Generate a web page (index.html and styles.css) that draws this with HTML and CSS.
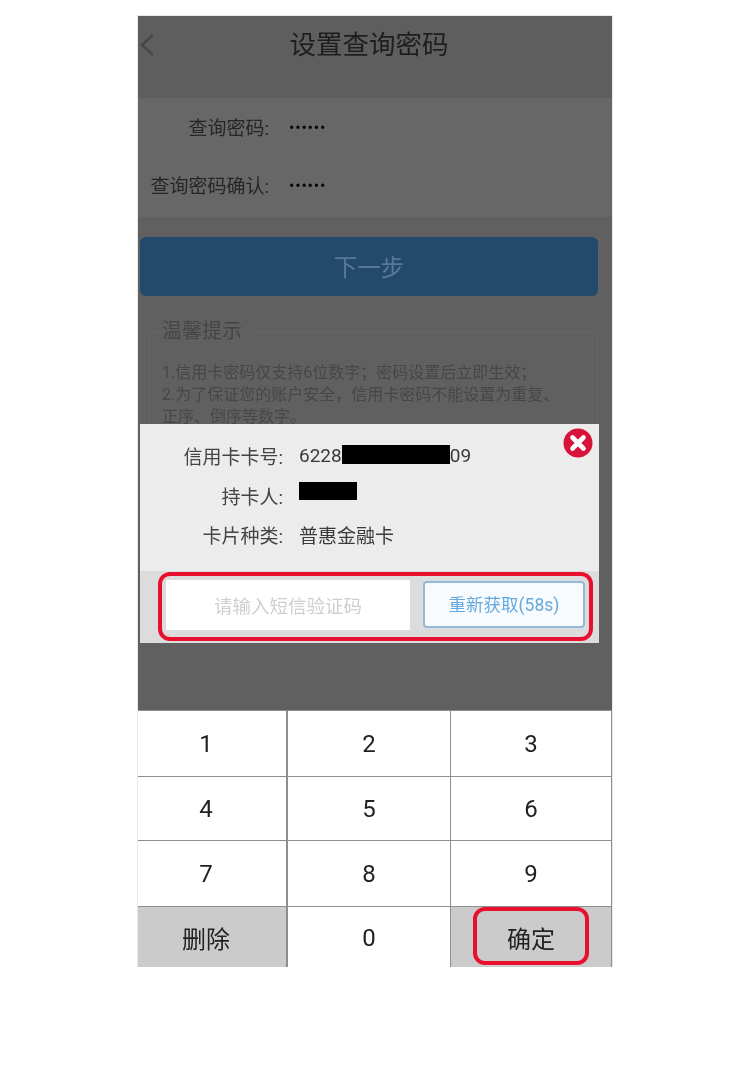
FILE: index.html
```html
<!DOCTYPE html>
<html lang="zh-CN">
<head>
    <meta charset="UTF-8">
    <title>设置查询密码</title>
    <link rel="stylesheet" href="styles.css">
</head>
<body>
    <div class="phone">
        <div class="screen">
            <header class="header">
                <svg class="back" width="16" height="24" viewBox="0 0 16 24"><path d="M14 2 L3 12 L14 22" fill="none" stroke="#474747" stroke-width="2.4"/></svg>
                <h1>设置查询密码</h1>
            </header>

            <div class="form">
                <div class="form-row"><span class="form-label">查询密码:</span><span class="dots">••••••</span></div>
                <div class="form-row"><span class="form-label">查询密码确认:</span><span class="dots">••••••</span></div>
            </div>

            <div class="next-btn">下一步</div>

            <fieldset class="tips">
                <legend>温馨提示</legend>
                <p>1.信用卡密码仅支持6位数字；密码设置后立即生效；</p>
                <p>2.为了保证您的账户安全，信用卡密码不能设置为重复、正序、倒序等数字。</p>
            </fieldset>

            <div class="dialog">
                <svg class="close" width="30" height="30" viewBox="0 0 30 30">
                    <circle cx="15" cy="15" r="14.5" fill="#d8123a"/>
                    <path d="M9.5 9.5 L20.5 20.5 M20.5 9.5 L9.5 20.5" stroke="#fff" stroke-width="4.6" stroke-linecap="round"/>
                </svg>
                <div class="info">
                    <div class="info-row"><span class="info-label">信用卡卡号:</span><span>6228<i class="redact redact-card"></i>09</span></div>
                    <div class="info-row"><span class="info-label">持卡人:</span><span><i class="redact redact-name"></i></span></div>
                    <div class="info-row"><span class="info-label">卡片种类:</span><span>普惠金融卡</span></div>
                </div>
                <div class="sms">
                    <div class="sms-input">请输入短信验证码</div>
                    <div class="sms-btn">重新获取(58s)</div>
                </div>
                <div class="mark mark-sms"></div>
            </div>
        </div>

        <div class="keypad">
            <div class="key">1</div>
            <div class="key">2</div>
            <div class="key">3</div>
            <div class="key">4</div>
            <div class="key">5</div>
            <div class="key">6</div>
            <div class="key">7</div>
            <div class="key">8</div>
            <div class="key">9</div>
            <div class="key key-gray">删除</div>
            <div class="key key-zero">0</div>
            <div class="key key-gray">确定<div class="mark mark-ok"></div></div>
        </div>
    </div>
</body>
</html>
```

FILE: styles.css
```css
/* General */
body {
    margin: 0;
    background: #fff;
    font-family: "Roboto", "Noto Sans CJK SC", sans-serif;
}

.phone {
    width: 474px;
    height: 951px;
    margin: 16px 0 0 138px;
    display: flex;
    flex-direction: column;
    outline: 1px solid #e8e8e8;
    filter: blur(0.5px);
}

/* Dimmed page behind the dialog */
.screen {
    flex: 1;
    position: relative;
    overflow: hidden;
    background: #606060;
}

.header {
    height: 82px;
    position: relative;
    padding-right: 12px;
    background: #5e5e5e;
}

.header h1 {
    margin: 0;
    padding-top: 10px;
    text-align: center;
    font-size: 26.5px;
    line-height: 38px;
    font-weight: 400;
    color: #1e1e1e;
}

.back {
    position: absolute;
    left: 1px;
    top: 17px;
}

.form {
    height: 119px;
    padding-bottom: 3px;
    box-sizing: border-box;
    background: #676767;
    display: flex;
    flex-direction: column;
    justify-content: center;
}

.form-row {
    height: 60px;
    display: flex;
    align-items: center;
}

.form-label {
    width: 131px;
    margin-top: -2px;
    text-align: right;
    font-size: 19px;
    color: #262626;
}

.dots {
    margin-left: 20px;
    font-size: 16px;
    letter-spacing: 0.8px;
    color: #050505;
}

.next-btn {
    height: 59px;
    margin: 20px 14px 0 2px;
    border-radius: 6px;
    background: #23496b;
    color: #587a96;
    font-size: 23.5px;
    line-height: 62px;
    text-align: center;
}

.tips {
    margin: 21px 14px 0 11px;
    padding: 17px 33px 0 12px;
    border: 1px solid #666;
    color: #474747;
    font-size: 16px;
    line-height: 22px;
}

.tips legend {
    padding: 0 15px 0 0;
    font-size: 20px;
    line-height: 28px;
    color: #454545;
}

.tips p {
    margin: 0;
}

/* Dialog */
.dialog {
    position: absolute;
    left: 2px;
    top: 408px;
    width: 459px;
    height: 219px;
    background: #ececec;
}

.close {
    position: absolute;
    left: 423px;
    top: 4px;
}

.info {
    height: 147px;
    padding-top: 12px;
    box-sizing: border-box;
    font-size: 19px;
    color: #3a3a3a;
}

.info-row {
    height: 39.5px;
    display: flex;
    align-items: center;
}

.info-label {
    width: 143px;
    margin-right: 16px;
    text-align: right;
    color: #444;
}

.redact {
    display: inline-block;
    background: #000;
    vertical-align: middle;
}

.redact-card {
    width: 108px;
    height: 19px;
    margin-top: -6px;
}

.redact-name {
    width: 58px;
    height: 18px;
    margin-top: -12px;
}

.sms {
    height: 72px;
    display: flex;
    align-items: flex-start;
    gap: 13px;
    padding: 9px 0 0 26px;
    box-sizing: border-box;
    background: #dcdcdc;
}

.sms-input {
    width: 244px;
    height: 50px;
    background: #fff;
    color: #cfcfcf;
    font-size: 18.5px;
    line-height: 54px;
    text-align: center;
}

.sms-btn {
    width: 158px;
    height: 43px;
    margin-top: 1px;
    border: 2px solid #94b9d8;
    border-radius: 4px;
    background: #f7fbfe;
    color: #66a9de;
    font-size: 17.5px;
    line-height: 45px;
    text-align: center;
}

/* Red annotation frames */
.mark {
    position: absolute;
    box-sizing: border-box;
    border: 4px solid #e8102e;
    border-radius: 12px;
}

.mark-sms {
    left: 18px;
    top: 148px;
    width: 435px;
    height: 69px;
}

.mark-ok {
    left: 22px;
    top: 0;
    width: 116px;
    height: 58px;
}

/* Number keypad */
.keypad {
    height: 257px;
    display: grid;
    grid-template-columns: 150px 163px 161px;
    grid-template-rows: 66px 64px 66px 61px;
    background: #fff;
}

.key {
    position: relative;
    display: flex;
    align-items: center;
    justify-content: center;
    box-sizing: border-box;
    border-top: 1px solid #8e8e8e;
    border-right: 1px solid #8e8e8e;
    font-size: 24px;
    line-height: 26px;
    color: #222;
}

.key:nth-child(3n+1) {
    padding-right: 12px;
    border-right-width: 2px;
}

.key-zero {
    padding-top: 2px;
}

.key-gray {
    padding-top: 5px;
    background: #cbcbcb;
}
```
